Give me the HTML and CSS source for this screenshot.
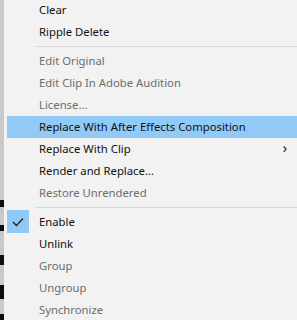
FILE: index.html
```html
<!DOCTYPE html>
<html lang="en">
<head>
    <meta charset="UTF-8" />
    <title>Clip menu</title>
    <link rel="stylesheet" href="styles.css">
</head>
<body>

<div id="screen">
    <div id="backdrop">
        <div class="bd gray" style="height: 200px"></div>
        <div class="bd dark" style="height: 7px"></div>
        <div class="bd gray" style="height: 18px"></div>
        <div class="bd dark" style="height: 6px"></div>
        <div class="bd gray" style="height: 24px"></div>
        <div class="bd dark" style="height: 10px"></div>
        <div class="bd gray" style="height: 20px"></div>
        <div class="bd dark" style="height: 14px"></div>
        <div class="bd gray" style="height: 15px"></div>
        <div class="bd dark" style="height: 6px"></div>
    </div>

    <div id="menu">
        <div class="item first">Clear</div>
        <div class="item">Ripple Delete</div>
        <div class="sep"></div>
        <div class="item off">Edit Original</div>
        <div class="item off">Edit Clip In Adobe Audition</div>
        <div class="item off">License...</div>
        <div class="item hot">Replace With After Effects Composition</div>
        <div class="item">Replace With Clip<span class="arrow">&#8250;</span></div>
        <div class="item">Render and Replace...</div>
        <div class="item off">Restore Unrendered</div>
        <div class="sep"></div>
        <div class="item checked">
            <span class="check">
                <svg width="12" height="10" viewBox="0 0 12 10"><path d="M1 5 L4.5 8.5 L11 1.5" fill="none" stroke="#222" stroke-width="1.3"/></svg>
            </span>Enable</div>
        <div class="item">Unlink</div>
        <div class="item off">Group</div>
        <div class="item off">Ungroup</div>
        <div class="item off">Synchronize</div>
    </div>
</div>

</body>
</html>
```

FILE: styles.css
```css
* { box-sizing: border-box; }
body {
    margin: 0;
    background: #f2f2f2;
    font-family: 'Noto Sans', 'Open Sans', sans-serif;
    font-size: 11.3px;
    overflow: hidden;
}
#screen {
    display: flex;
    width: 297px;
    height: 320px;
    overflow: hidden;
}
#backdrop {
    width: 4px;
    display: flex;
    flex-direction: column;
}
.bd.gray { background: #c9c9c9; }
.bd.dark { background: #0c0c0c; }
#menu {
    flex: 1;
    background: #f2f2f2;
    padding: 0 0 0 3px;
}
.item {
    height: 22px;
    line-height: 22px;
    padding-left: 32px;
    color: #111;
    position: relative;
    white-space: nowrap;
}
.item.first { margin-top: -1px; }
.item.off { color: #6d6d6d; }
.item.hot { background: #91c9f7; }
.arrow {
    position: absolute;
    right: 10px;
    top: -1px;
    font-size: 14px;
}
.check {
    position: absolute;
    left: 0;
    top: -1px;
    width: 22px;
    height: 23px;
    background: #90c8f6;
    display: flex;
    align-items: center;
    justify-content: center;
}
.sep {
    height: 7px;
    margin-left: 28px;
    padding-top: 3px;
}
.sep::before {
    content: "";
    display: block;
    height: 1px;
    background: #d7d7d7;
}
```
